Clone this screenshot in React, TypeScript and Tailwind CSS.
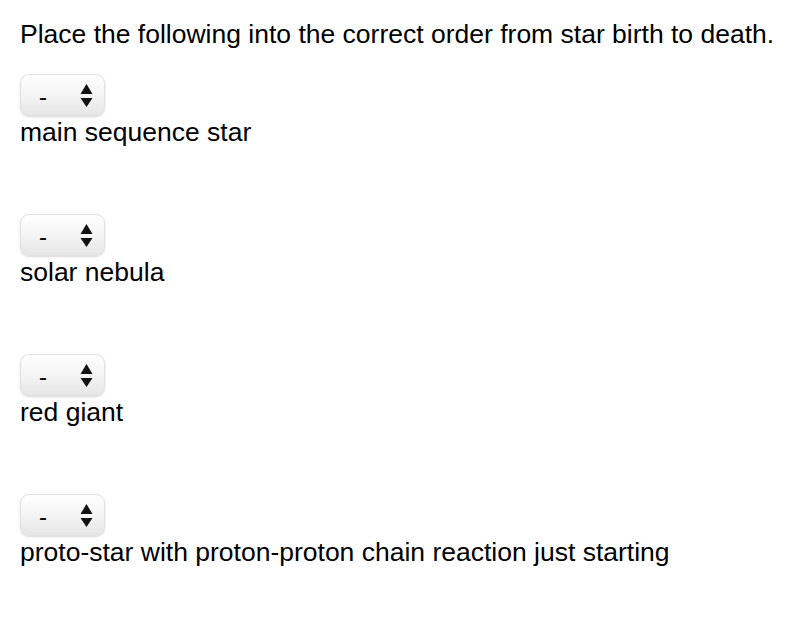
import React from "react";

const items = [
  "main sequence star",
  "solar nebula",
  "red giant",
  "proto-star with proton-proton chain reaction just starting",
];

function FakeSelect() {
  return (
    <div className="relative flex h-[42px] w-[85px] items-center rounded-[9px] border border-[#e2e2e2] bg-gradient-to-b from-[#fefefe] via-[#f4f4f4] to-[#e6e6e6] shadow-[0_1px_2px_rgba(0,0,0,0.15)]">
      <span className="ml-[18px] mt-[4px] text-[24px] leading-none text-black">-</span>
      <svg className="absolute left-[59px] top-[9px]" width="13" height="24" viewBox="0 0 13 24">
        <polygon points="6.5,0 12.5,10 0.5,10" fill="#111" />
        <polygon points="0.5,14 12.5,14 6.5,23" fill="#111" />
      </svg>
    </div>
  );
}

export default function App() {
  return (
    <div className="min-h-[620px] bg-white pl-[20px] pt-[19px] text-black" style={{ fontFamily: '"Liberation Sans", Arial, sans-serif' }}>
      <p className="text-[26.5px] leading-[30px]">Place the following into the correct order from star birth to death.</p>
      <div className="mt-[25px] flex flex-col gap-[67px]">
        {items.map((t) => (
          <div key={t} className="flex flex-col">
            <FakeSelect />
            <div className="mt-[1px] text-[26.5px] leading-[30px]">{t}</div>
          </div>
        ))}
      </div>
    </div>
  );
}
